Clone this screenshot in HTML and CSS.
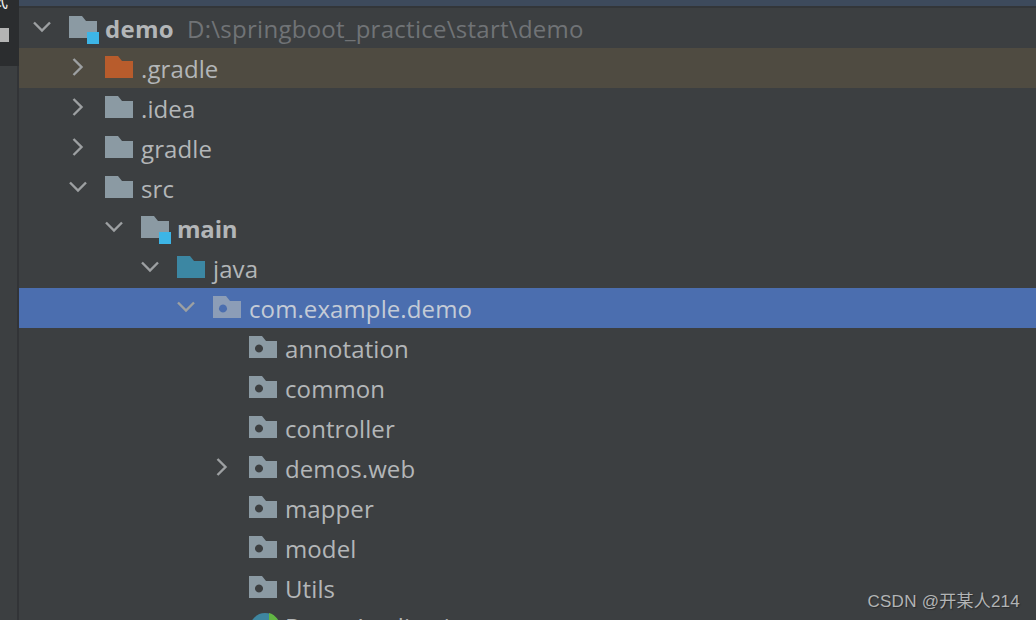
FILE: index.html
```html
<!DOCTYPE html>
<html lang="zh">
<head>
<meta charset="utf-8">
<title>Project tree</title>
<link rel="stylesheet" href="styles.css">
</head>
<body>
<svg class="defs" width="0" height="0" aria-hidden="true">
  <symbol id="down" viewBox="0 0 20 20"><path d="M2 5.500 10 13.500 18 5.500" fill="none" stroke="#9da0a2" stroke-width="2.4"/></symbol>
  <symbol id="right" viewBox="0 0 20 20"><path d="M5.500 2 13.500 10 5.500 18" fill="none" stroke="#9da0a2" stroke-width="2.4"/></symbol>
  <symbol id="folder" viewBox="0 0 28 22"><path d="M0 0H13L17 5H28V22H0Z"/></symbol>
  <symbol id="package" viewBox="0 0 28 22"><path fill-rule="evenodd" d="M0 0H13L17 5H28V22H0ZM10 8.500a4 4 0 1 0 .01 0Z"/></symbol>
  <symbol id="module" viewBox="0 0 30 28"><path d="M0 0H13L17 5H28V22H0Z" fill="#8b9aa3"/><rect x="18" y="16" width="12" height="12" fill="#3db5e6"/></symbol>
</svg>
<div class="app">
  <aside class="side">
    <div class="side-top"><span class="glyph">式</span><span class="square"></span></div>
  </aside>
  <main class="panel">
    <div class="titlebar"></div>
    <ul class="tree">
      <li class="row d0"><svg class="arrow"><use href="#down"/></svg><svg class="icon mod"><use href="#module"/></svg><span class="name bold root">demo</span><span class="path">D:\springboot_practice\start\demo</span></li>
      <li class="row d1 ignored"><svg class="arrow"><use href="#right"/></svg><svg class="icon orange"><use href="#folder"/></svg><span class="name">.gradle</span></li>
      <li class="row d1"><svg class="arrow"><use href="#right"/></svg><svg class="icon"><use href="#folder"/></svg><span class="name">.idea</span></li>
      <li class="row d1"><svg class="arrow"><use href="#right"/></svg><svg class="icon"><use href="#folder"/></svg><span class="name">gradle</span></li>
      <li class="row d1"><svg class="arrow"><use href="#down"/></svg><svg class="icon"><use href="#folder"/></svg><span class="name">src</span></li>
      <li class="row d2"><svg class="arrow"><use href="#down"/></svg><svg class="icon mod"><use href="#module"/></svg><span class="name bold">main</span></li>
      <li class="row d3"><svg class="arrow"><use href="#down"/></svg><svg class="icon teal"><use href="#folder"/></svg><span class="name">java</span></li>
      <li class="row d4 selected"><svg class="arrow"><use href="#down"/></svg><svg class="icon pale"><use href="#package"/></svg><span class="name">com.example.demo</span></li>
      <li class="row d5"><span class="arrow"></span><svg class="icon"><use href="#package"/></svg><span class="name">annotation</span></li>
      <li class="row d5"><span class="arrow"></span><svg class="icon"><use href="#package"/></svg><span class="name">common</span></li>
      <li class="row d5"><span class="arrow"></span><svg class="icon"><use href="#package"/></svg><span class="name">controller</span></li>
      <li class="row d5"><svg class="arrow"><use href="#right"/></svg><svg class="icon"><use href="#package"/></svg><span class="name">demos.web</span></li>
      <li class="row d5"><span class="arrow"></span><svg class="icon"><use href="#package"/></svg><span class="name">mapper</span></li>
      <li class="row d5"><span class="arrow"></span><svg class="icon"><use href="#package"/></svg><span class="name">model</span></li>
      <li class="row d5"><span class="arrow"></span><svg class="icon"><use href="#package"/></svg><span class="name">Utils</span></li>
      <li class="row d5 last"><span class="arrow"></span><svg class="icon app-icon" viewBox="0 0 30 30"><circle cx="15" cy="15" r="15" fill="#3e86a0"/><path d="M19 0A15 15 0 0 1 30 15H19Z" fill="#62b543"/></svg><span class="name">DemoApplication</span></li>
    </ul>
  </main>
</div>
<div class="watermark">CSDN @开某人214</div>
</body>
</html>
```
FILE: styles.css
```css
* { box-sizing: border-box; }
html, body { margin: 0; height: 100%; overflow: hidden; }
body {
  background: #3c3f41;
  color: #b3b6b8;
  font-family: "Open Sans", "Noto Sans", "Noto Sans CJK SC", sans-serif;
}
.defs { position: absolute; }
.app { display: flex; height: 620px; overflow: hidden; }
.side {
  flex: 0 0 19px;
  background: #3c3f41;
  border-right: 2px solid #323437;
}
.side-top {
  height: 66px;
  background: #2b2d2f;
  display: flex;
  flex-direction: column;
  overflow: hidden;
  margin-right: -2px;
}
.glyph {
  color: #f4f4f4;
  font: 16px/16px "Noto Sans CJK SC", sans-serif;
  height: 28px;
  margin: -8px 0 0 -8px;
  padding-bottom: 20px;
  flex: none;
}
.square { display: block; width: 9px; height: 14px; background: #b4b4b4; margin-top: 8px; flex: none; }
.panel { flex: 1; min-width: 0; }
.titlebar {
  height: 8px;
  background: #3d4a5c;
  border-bottom: 2px solid #333639;
}
.tree { list-style: none; margin: 0; padding: 0; }
.row {
  height: 40px;
  display: flex;
  align-items: center;
  white-space: nowrap;
  font-size: 24px;
  letter-spacing: 0.1px;
}
.d0 { padding-left: 13px; }
.d1 { padding-left: 49px; }
.d2 { padding-left: 85px; }
.d3 { padding-left: 121px; }
.d4 { padding-left: 157px; }
.d5 { padding-left: 193px; }
.arrow { width: 20px; height: 20px; flex: none; margin-top: -2px; }
.icon {
  width: 28px;
  height: 22px;
  flex: none;
  margin-left: 17px;
  margin-right: 8px;
  margin-top: -2px;
  fill: #8b9aa3;
}
.mod { width: 30px; height: 28px; margin-right: 6px; margin-top: 4px; }
.orange { fill: #b85c2c; }
.teal { fill: #3c87a3; }
.pale { fill: #8c9db7; }
.app-icon { width: 30px; height: 30px; margin-left: 18px; margin-right: 5px; margin-top: 0; }
.last .name { margin-top: -4px; }
.ignored { background: #4f4b41; }
.selected { background: #4b6eaf; }
.selected .name { color: #c4cbd6; }
.bold { font-weight: 700; letter-spacing: -0.2px; }
.root { letter-spacing: 0.3px; }
.path { margin-left: 13px; color: #707376; letter-spacing: 0.27px; }
.watermark {
  position: absolute;
  right: 16px;
  bottom: 7px;
  font-family: "Liberation Sans", "Noto Sans CJK SC", sans-serif;
  font-size: 17px;
  letter-spacing: 0.25px;
  line-height: 22px;
  color: #b2b4b5;
  text-shadow: 1px 1px 1px #2a2c2e;
}
```
